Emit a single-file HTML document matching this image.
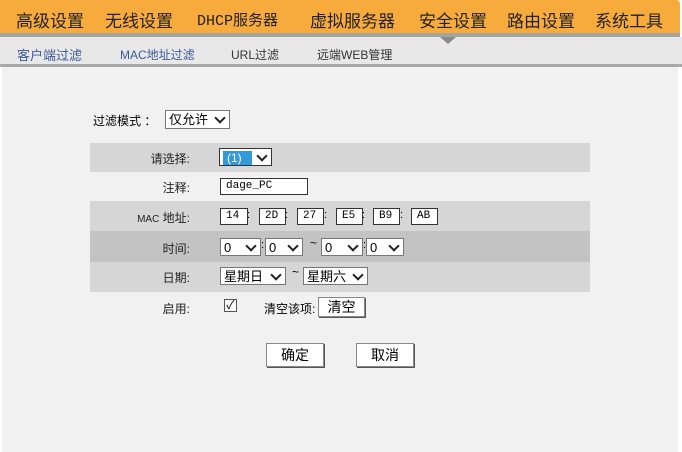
<!DOCTYPE html>
<html><head><meta charset="utf-8"><style>
body{margin:0;width:682px;height:452px;background:#fff;font-family:"Liberation Sans","Noto Sans CJK SC",sans-serif;position:relative;overflow:hidden}
.a{position:absolute;white-space:nowrap}
.top{left:0;top:0;width:680px;height:33px;background:#f7ab3c;border-radius:0 4px 0 0}
.sh{left:0;top:33px;width:680px;height:4px;background:#a4a4a4}
.sub{left:0;top:37px;width:682px;height:27px;background:#e8e8e8}
.ln{left:0;top:64px;width:682px;height:3px;background:#a8a8a8}
.cont{left:2px;top:67px;width:676px;height:385px;background:#f1f1f1;border-right:2px solid #fff}
.m{top:7px;font-size:17px;color:#222}
.s{top:45px;font-size:13px;color:#333}
.row{left:90px;width:500px}
.lb{font-size:12px;color:#222;text-align:right;width:100px;left:90px}
.box{background:#fff;border:1px solid #333;font-size:11px;font-family:"Liberation Mono",monospace;height:15px;line-height:15px;padding-left:5px;box-sizing:content-box}
.sel{background:#fff;border:1px solid #777;font-size:13px;height:18px;line-height:18px;padding-left:3px;box-sizing:border-box}
.sel:after{content:"";position:absolute;right:5px;top:3px;width:6px;height:6px;border-right:2px solid #222;border-bottom:2px solid #222;transform:rotate(45deg)}
.btn{background:#fff;border:1px solid #888;box-shadow:1px 1px 0 #555;font-size:14px;text-align:center}
</style></head><body>
<div class="a top"></div><div class="a sh"></div><div class="a sub"></div><div class="a ln"></div>
<div class="a" style="left:440px;top:37px;width:0;height:0;border-left:8px solid transparent;border-right:8px solid transparent;border-top:7px solid #8a8a8a"></div>
<div class="a cont"></div>
<div class="a m" style="left:16px">高级设置</div>
<div class="a m" style="left:105px">无线设置</div>
<div class="a m" style="left:197px;font-family:'Liberation Mono','Noto Sans CJK SC',monospace;font-size:15px;top:9px">DHCP服务器</div>
<div class="a m" style="left:310px">虚拟服务器</div>
<div class="a m" style="left:419px">安全设置</div>
<div class="a m" style="left:507px">路由设置</div>
<div class="a m" style="left:595px">系统工具</div>
<div class="a s" style="left:17px;color:#3b5a9a">客户端过滤</div>
<div class="a s" style="left:120px;color:#3b5a9a;font-size:12px;top:46px">MAC地址过滤</div>
<div class="a s" style="left:231px;font-size:12px;top:46px">URL过滤</div>
<div class="a s" style="left:317px;font-size:12px;top:46px">远端WEB管理</div>

<div class="a" style="left:93px;top:112px;font-size:12px">过滤模式 ：</div>
<div class="a sel" style="left:165px;top:110px;width:65px;height:19px">仅允许</div>

<div class="a row" style="top:143px;height:29px;background:#d6d6d6"></div>
<div class="a row" style="top:201px;height:30px;background:#d6d6d6"></div>
<div class="a row" style="top:231px;height:31px;background:#c3c3c3"></div>
<div class="a row" style="top:262px;height:30px;background:#d6d6d6"></div>

<div class="a lb" style="top:150px">请选择:</div>
<div class="a sel" style="left:219px;top:148px;width:53px;border-color:#333"><span style="background:#3399dd;color:#fff;padding:0 10px 0 4px;font-size:12px">(1)</span></div>
<div class="a lb" style="top:179px">注释:</div>
<div class="a box" style="left:220px;top:178px;width:81px">dage_PC</div>
<div class="a lb" style="top:209px"><span style="font-size:10px">MAC</span> 地址:</div>
<div class="a box" style="left:220px;top:208px;width:21px">14</div><div class="a" style="left:247px;top:209px;font-size:11px">:</div>
<div class="a box" style="left:259px;top:208px;width:20px">2D</div><div class="a" style="left:285px;top:209px;font-size:11px">:</div>
<div class="a box" style="left:297px;top:208px;width:20px">27</div><div class="a" style="left:324px;top:209px;font-size:11px">:</div>
<div class="a box" style="left:336px;top:208px;width:20px">E5</div><div class="a" style="left:362px;top:209px;font-size:11px">:</div>
<div class="a box" style="left:373px;top:208px;width:20px">B9</div><div class="a" style="left:400px;top:209px;font-size:11px">:</div>
<div class="a box" style="left:411px;top:208px;width:20px">AB</div>
<div class="a lb" style="top:240px">时间:</div>
<div class="a sel" style="left:220px;top:238px;width:41px">0</div><div class="a" style="left:261px;top:239px;font-size:11px">:</div>
<div class="a sel" style="left:265px;top:238px;width:38px">0</div>
<div class="a" style="left:310px;top:236px;font-size:12px">~</div>
<div class="a sel" style="left:321px;top:238px;width:42px">0</div><div class="a" style="left:363px;top:239px;font-size:11px">:</div>
<div class="a sel" style="left:366px;top:238px;width:38px">0</div>
<div class="a lb" style="top:269px">日期:</div>
<div class="a sel" style="left:220px;top:267px;width:66px">星期日</div>
<div class="a" style="left:292px;top:265px;font-size:12px">~</div>
<div class="a sel" style="left:303px;top:267px;width:65px">星期六</div>
<div class="a lb" style="top:300px">启用:</div>
<div class="a" style="left:224px;top:299px;width:11px;height:11px;border:1px solid #555;background:#fff;font-size:12px;line-height:11px;text-align:center">✓</div>
<div class="a" style="left:264px;top:300px;font-size:12px">清空该项:</div>
<div class="a btn" style="left:318px;top:297px;width:45px;height:18px;line-height:18px">清空</div>
<div class="a btn" style="left:266px;top:343px;width:56px;height:22px;line-height:22px">确定</div>
<div class="a btn" style="left:356px;top:343px;width:56px;height:22px;line-height:22px">取消</div>
</body></html>
